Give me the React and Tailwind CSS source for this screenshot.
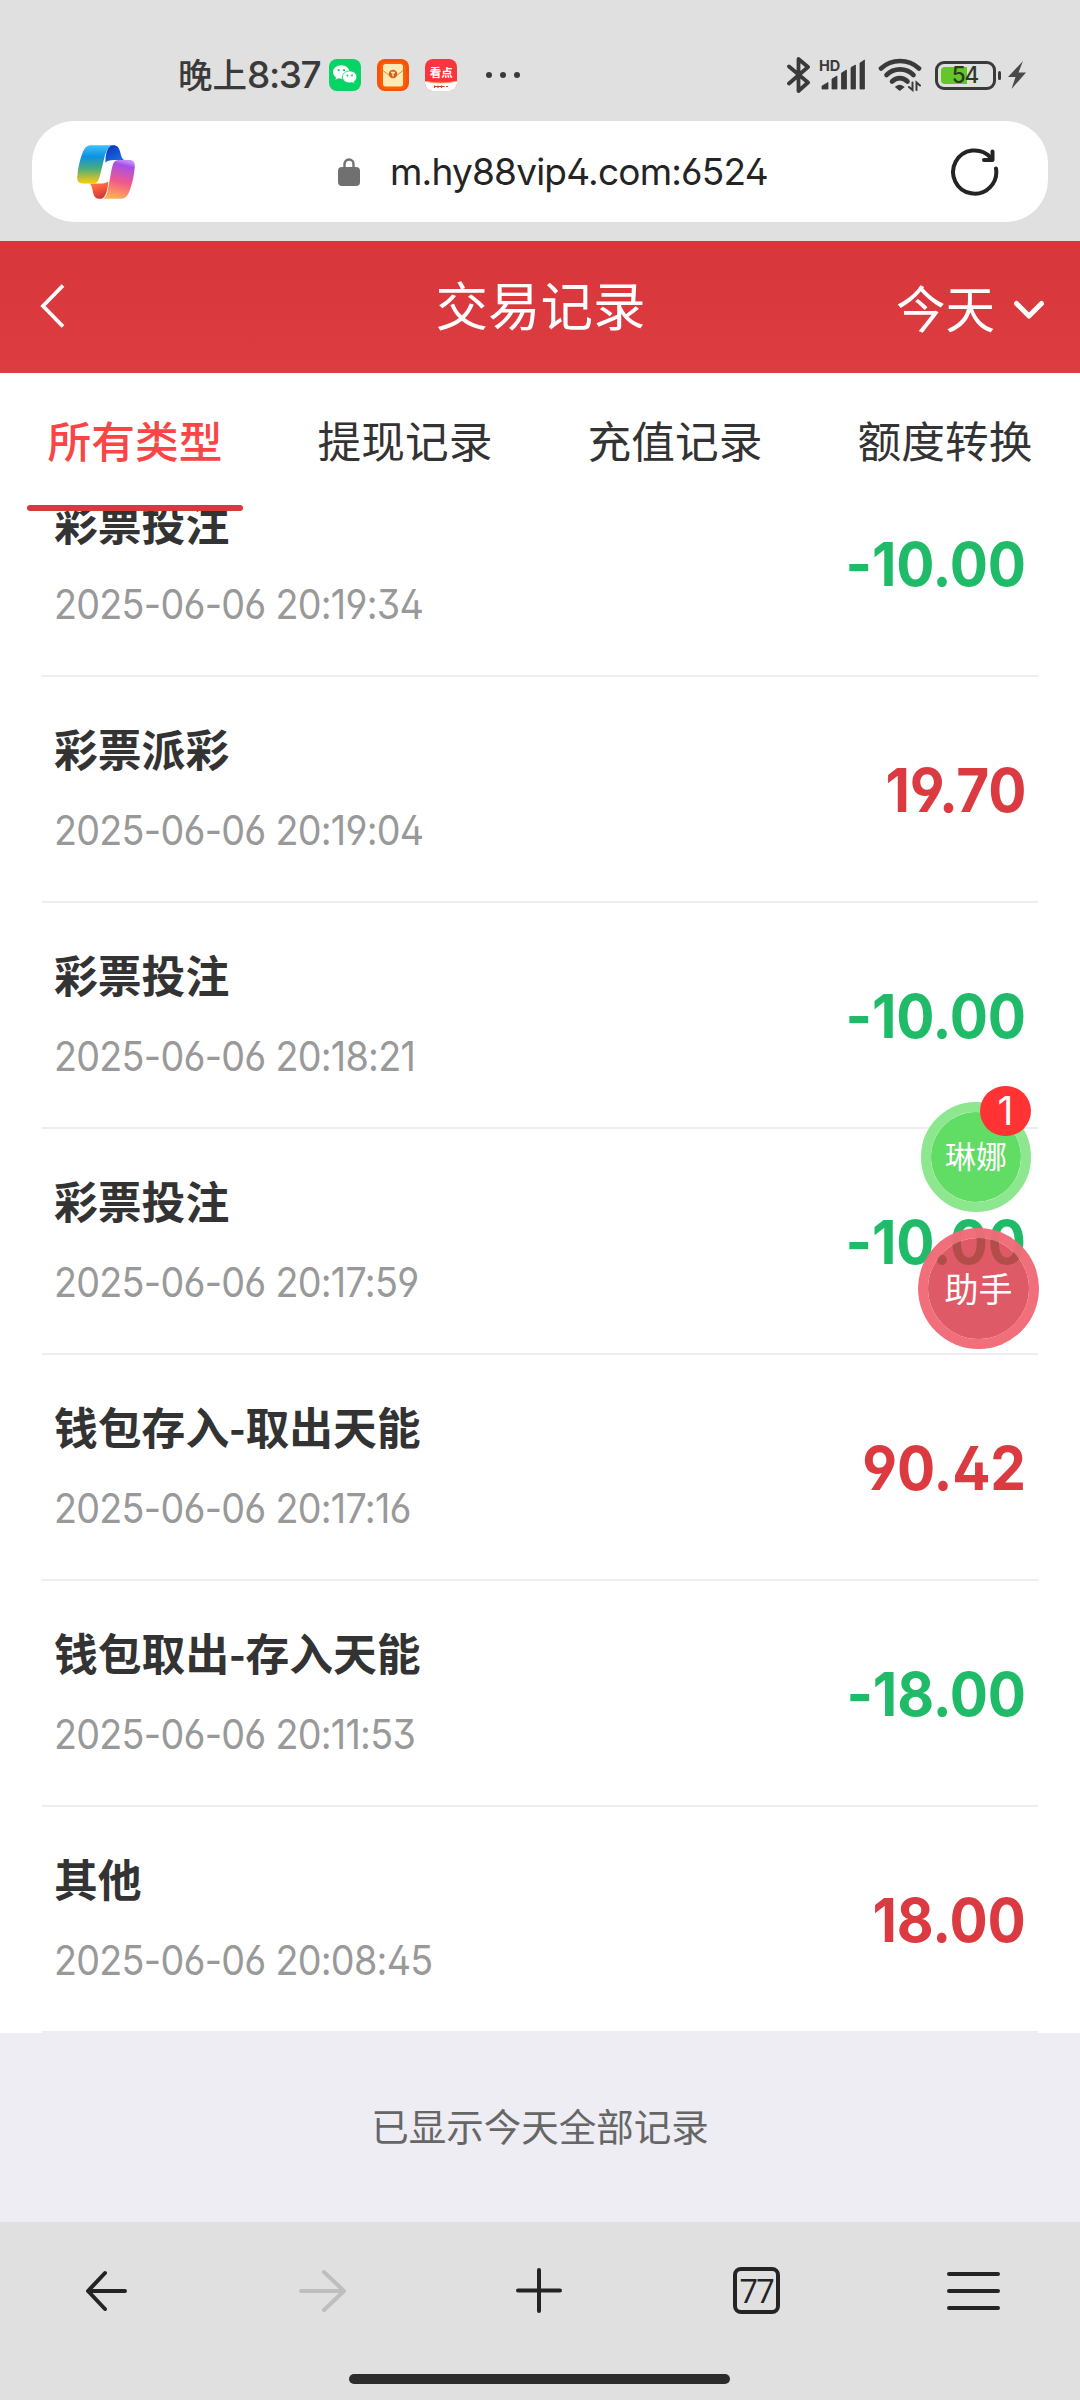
import React, { useState } from "react";

const tabs = ["所有类型", "提现记录", "充值记录", "额度转换"];

const records = [
  { id: 1, title: "彩票投注", time: "2025-06-06 20:19:34", amount: "-10.00" },
  { id: 2, title: "彩票派彩", time: "2025-06-06 20:19:04", amount: "19.70" },
  { id: 3, title: "彩票投注", time: "2025-06-06 20:18:21", amount: "-10.00" },
  { id: 4, title: "彩票投注", time: "2025-06-06 20:17:59", amount: "-10.00" },
  { id: 5, title: "钱包存入-取出天能", time: "2025-06-06 20:17:16", amount: "90.42" },
  { id: 6, title: "钱包取出-存入天能", time: "2025-06-06 20:11:53", amount: "-18.00" },
  { id: 7, title: "其他", time: "2025-06-06 20:08:45", amount: "18.00" },
];

// --- Status bar app icons ---
const WechatIcon = () => (
  <svg width="32" height="32" viewBox="0 0 32 32">
    <rect width="32" height="32" rx="8" fill="#07d366" />
    <path d="M12.3 6.2C7.600 6.200 4 9.200 4 13c0 2.200 1.200 4 3 5.300l-.6 2.500 3-1.500c.9.200 1.900.4 2.900.4 4.600 0 8.300-3 8.300-6.700s-3.700-6.800-8.300-6.800z" fill="#fff" />
    <circle cx="9.600" cy="11.200" r="1.100" fill="#07d366" />
    <circle cx="15" cy="11.200" r="1.100" fill="#07d366" />
    <path d="M20.700 12c-4.100 0-7.300 2.600-7.300 6s3.200 5.900 7.300 5.900c.9 0 1.700-.1 2.500-.4l2.500 1.400-.6-2.300c1.700-1.100 2.700-2.700 2.700-4.600 0-3.400-3-6-7.100-6z" fill="#fff" stroke="#07d366" strokeWidth=".8" />
    <circle cx="18.400" cy="16.500" r="1" fill="#07d366" />
    <circle cx="23" cy="16.500" r="1" fill="#07d366" />
  </svg>
);

const EnvelopeIcon = () => (
  <svg width="32" height="32" viewBox="0 0 32 32">
    <rect width="32" height="32" rx="8" fill="#fb5103" />
    <rect x="3" y="3" width="26" height="27" rx="6" fill="#fd7a1c" opacity=".35" />
    <rect x="6" y="5" width="20" height="22.500" rx="2.500" fill="#fdebb5" />
    <path d="M6 11.500l7 5.500M26 11.500l-7 5.500" stroke="#d98a3c" strokeWidth="1" />
    <circle cx="16" cy="15" r="4.300" fill="#d9601c" />
    <path d="M14 13.500h4M16 13.500v4" stroke="#fdebb5" strokeWidth="1.300" />
  </svg>
);

const KandianIcon = () => (
  <div className="relative flex h-8 w-8 flex-col items-center overflow-hidden rounded-lg bg-[#fb3540]">
    <span className="mt-[6px] text-[11.5px] leading-[15px] font-bold text-white">看点</span>
    <svg className="absolute bottom-0 left-0" width="32" height="10" viewBox="0 0 32 10">
      <path d="M0 0c9 2.500 22 2.500 32 0v10H0z" fill="#fff" />
      <path d="M0 0c9 2.500 22 2.500 32 0" stroke="#ff9a5c" strokeWidth="1" fill="none" />
      <path d="M9.500 5.500h10M9.500 4.500v2.500M13 4.500v2.500M16.500 4.500v2.500M21 5.500h2" stroke="#c9423f" strokeWidth="1.200" fill="none" />
    </svg>
  </div>
);

const CopilotLogo = () => (
  <svg width="58" height="54" viewBox="165 104 168 161" preserveAspectRatio="none">
    <defs>
      <linearGradient id="cpBlue" x1="0" y1="0" x2="0" y2="1">
        <stop offset="0" stopColor="#3bc2fb" />
        <stop offset=".3" stopColor="#0e90e0" />
        <stop offset=".62" stopColor="#4fae7a" />
        <stop offset=".98" stopColor="#fbcb0e" />
      </linearGradient>
      <linearGradient id="cpNavy" x1="0.2" y1="0" x2=".8" y2="1">
        <stop offset="0" stopColor="#0a35be" />
        <stop offset="1" stopColor="#1f74e2" />
      </linearGradient>
      <linearGradient id="cpPink" x1=".6" y1="0" x2=".4" y2="1">
        <stop offset="0" stopColor="#c38bf5" />
        <stop offset=".12" stopColor="#a550e8" />
        <stop offset=".55" stopColor="#f0598c" />
        <stop offset="1" stopColor="#feb150" />
      </linearGradient>
      <linearGradient id="cpRed" x1="0.2" y1="0" x2=".6" y2="1">
        <stop offset="0" stopColor="#fd8a45" />
        <stop offset=".5" stopColor="#f6583c" />
        <stop offset="1" stopColor="#c9373c" />
      </linearGradient>
    </defs>
    <path d="M262 105h8c12 0 17 8 20 20 3 14 6 22 13 24h-30q-20 0-26 8 0-38 15-52z" fill="url(#cpNavy)" />
    <path d="M200 219h30q20 0 26-8c-2 26-8 50-20 53h-8c-10 0-14-8-17-20-2-12-4-22-11-25z" fill="url(#cpRed)" />
    <path d="M206 105h62c-14 4-20 22-25 42l-11 46c-5 18-8 26-18 26h-32c-14 0-18-8-16-24 2-24 8-50 16-70 5-12 12-20 24-20z" fill="url(#cpBlue)" />
    <path d="M285 149h30c14 0 19 8 17 24-2 24-8 50-15 68-5 14-12 23-24 23h-52c8-3 11-14 14-30l10-56c4-18 7-29 20-29z" fill="url(#cpPink)" />
  </svg>
);

const StatusBar = () => (
  <div className="flex h-[121px] items-start justify-between pt-[55px] pr-[54px] pl-[178px] text-[#3a3a3a]">
    <div className="flex h-10 items-center">
      <span className="mb-[5px] text-[34.5px] leading-10 font-medium">晚上</span>
      <span className="font-[Inter] text-[37px] leading-10 font-medium tracking-[-1.4px]">8:37</span>
      <div className="ml-[9px] flex gap-4">
        <WechatIcon />
        <EnvelopeIcon />
        <KandianIcon />
      </div>
      <div className="ml-[29px] flex gap-2">
        <i className="size-[6px] rounded-full bg-[#3a3a3a]" />
        <i className="size-[6px] rounded-full bg-[#3a3a3a]" />
        <i className="size-[6px] rounded-full bg-[#3a3a3a]" />
      </div>
    </div>
    <div className="flex h-10 items-center">
      <svg width="24" height="38" viewBox="0 0 24 38" fill="none" stroke="#3a3a3a" strokeWidth="3.800" strokeLinejoin="round" strokeLinecap="round">
        <path d="M2 10.500l19 16-9.500 8.500V3L21 11 2 27.500" />
      </svg>
      {/* HD + signal bars */}
      <svg className="ml-[8px]" width="50" height="34" viewBox="0 0 50 34" fill="#3a3a3a">
        <text x="0" y="12.500" fontSize="14.500" fontWeight="700" fontFamily="Inter, sans-serif">HD</text>
        <path d="M3 31v-3l6-3.500v6.500zM13 31V21l5-3v13zM22.500 31V15l5-3v19zM32 31V9.500l4.500-2.500v24zM41 31V5l4.500-3v29z" stroke="#3a3a3a" strokeWidth=".8" strokeLinejoin="round" />
      </svg>
      <svg className="ml-[9px]" width="44" height="34" viewBox="0 0 44 34" fill="none" stroke="#3a3a3a" strokeWidth="4.600" strokeLinecap="round">
        <path d="M3 10.500c10.500-10 27.500-10 38 0" />
        <path d="M8.500 17c7.500-7.500 19.500-7.500 27 0" />
        <path d="M14 23.500c4.500-4.500 11-4.500 15.500 0" />
        <path d="M18 29q3.500-3 7.500 0l-3.700 3z" fill="#3a3a3a" strokeWidth="1.500" />
        <path d="M34.500 24.500v7.500l-3.500-3M38.500 32v-7.500l3.500 3" strokeWidth="2" />
      </svg>
      <div className="ml-[13px] flex items-center">
        <div className="relative flex h-[29px] w-[61px] items-center justify-center rounded-[9px] border-[3px] border-[#3a3a3a]">
          <div className="absolute top-[3px] left-[3px] h-[17px] w-[26px] rounded-l-[4px] bg-[#63c728]" />
          <span className="relative font-[Inter] text-[22.5px] leading-[22px] font-medium tracking-[-1px] text-[#2c3a24]">54</span>
        </div>
        <div className="ml-[2px] h-[9px] w-[3.5px] rounded-full bg-[#3a3a3a]" />
      </div>
      <svg className="ml-[7px]" width="18" height="28" viewBox="0 0 18 28" fill="#4a4a4a">
        <path d="M15 0L0 16h7.500L3.500 28 18 11.500h-7.500z" />
      </svg>
    </div>
  </div>
);

const AddressBar = () => (
  <div className="px-8">
    <div className="flex h-[101px] items-center rounded-[42px] bg-white pr-[48px] pl-[45px]">
      <CopilotLogo />
      <svg className="ml-[203px]" width="22" height="28" viewBox="0 0 22 28">
        <rect x="0" y="9" width="22" height="19" rx="4" fill="#707070" />
        <path d="M6.500 10V6a4.500 4.500 0 019 0v4" stroke="#707070" strokeWidth="2.400" fill="none" />
      </svg>
      <span className="ml-[30px] font-[Inter] text-[37px] leading-[50px] tracking-[-0.8px] whitespace-nowrap text-[#242424] [font-feature-settings:'ss01']">
        m.hy88vip4.com:6524
      </span>
      <svg className="ml-auto" width="50" height="50" viewBox="0 0 50 50" fill="none" stroke="#242424" strokeWidth="4" strokeLinecap="round" strokeLinejoin="round">
        <path d="M46 21.500A21.600 21.600 0 1 1 40.500 10.300" />
        <path d="M42.500 4.500v8.500h-8.500" />
      </svg>
    </div>
  </div>
);

const RecordRow = ({ record }) => {
  const isOut = record.amount.startsWith("-");
  return (
    <div className="mx-[42px] flex h-[226px] shrink-0 items-center justify-between border-b-2 border-[#eeeeee] pr-[12px] pl-[12px]">
      <div className="flex flex-col gap-[22px] pb-[1px]">
        <p className="text-[43.8px] leading-[60px] font-bold text-[#333333]">{record.title}</p>
        <p className="origin-left scale-x-[0.92] font-[Inter] text-[41px] leading-[60px] tracking-[-0.8px] text-[#999999] [font-feature-settings:'ss01']">
          {record.time}
        </p>
      </div>
      <p
        className={`origin-right scale-x-[0.93] pt-[2px] font-[Inter] text-[61px] leading-[70px] font-[650] tracking-[-0.2px] [font-feature-settings:'ss01'] ${
          isOut ? "text-[#1fbb69]" : "text-[#db3b40]"
        }`}
      >
        {record.amount}
      </p>
    </div>
  );
};

const BottomNav = () => (
  <div className="flex h-[178px] flex-col items-center bg-[#e0e0e0]">
    <div className="grid h-[137px] w-full grid-cols-5 place-items-center">
      <svg width="50" height="50" viewBox="0 0 50 50" fill="none" stroke="#242424" strokeWidth="4" strokeLinecap="round" strokeLinejoin="round">
        <path d="M42 25H5.500M22 7L5 25l17 18" />
      </svg>
      <svg width="50" height="50" viewBox="0 0 50 50" fill="none" stroke="#bebebe" strokeWidth="4" strokeLinecap="round" strokeLinejoin="round">
        <path d="M2 25h43M25 6l20 19-20 19" />
      </svg>
      <svg width="50" height="50" viewBox="0 0 50 50" fill="none" stroke="#242424" strokeWidth="4" strokeLinecap="round">
        <path d="M3 24.500h42M24 4v41" />
      </svg>
      <div className="flex h-[47px] w-[47px] items-center justify-center rounded-lg border-4 border-[#242424] text-[#242424]">
        <span className="font-[Open_Sans] text-[33px] leading-[33px] tracking-[-2px]">77</span>
      </div>
      <svg width="56" height="50" viewBox="0 0 56 50" fill="none" stroke="#242424" strokeWidth="4" strokeLinecap="round">
        <path d="M5 8h49M5 25h49M5 42h49" />
      </svg>
    </div>
    <div className="mt-[15px] mr-[2px] h-[10px] w-[381px] rounded-full bg-[#2c2c2c]" />
  </div>
);

const App = () => {
  const [activeTab, setActiveTab] = useState(0);

  return (
    <div className="relative flex h-[2400px] w-[1080px] flex-col overflow-hidden bg-[#e0e0e0] font-['Noto_Sans_CJK_SC',sans-serif]">
      <StatusBar />
      <AddressBar />

      {/* Page header */}
      <header className="mt-[19px] grid h-[132px] shrink-0 grid-cols-[1fr_auto_1fr] items-center bg-linear-to-b from-[#d7363b] to-[#dd3c41] pr-[34px] pl-[39px] text-white">
        <svg className="mb-[3px]" width="26" height="44" viewBox="0 0 26 44" fill="none" stroke="#fff" strokeWidth="3.800">
          <path d="M24 1.500L4 22l20 20.500" />
        </svg>
        <h1 className="-ml-[4px] pb-[9px] text-[52.5px] leading-[72px]">交易记录</h1>
        <div className="flex items-center justify-end gap-[17px]">
          <span className="text-[49.5px] leading-[70px]">今天</span>
          <svg className="mt-[6px]" width="34" height="22" viewBox="0 0 34 22" fill="none" stroke="#fff" strokeWidth="5" strokeLinecap="round" strokeLinejoin="round">
            <path d="M4.500 4.500L17 17 29.500 4.500" />
          </svg>
        </div>
      </header>

      {/* Type tabs */}
      <nav className="grid h-[138px] shrink-0 grid-cols-4 bg-white">
        {tabs.map((tab, i) => (
          <button
            key={tab}
            className={`flex flex-col items-center justify-between pt-[35px] text-[43.7px] leading-[62px] ${
              activeTab === i ? "font-medium text-[#f94545]" : "text-[#333333]"
            }`}
            onClick={() => setActiveTab(i)}
          >
            {tab}
            <i className={`h-[6px] w-[216px] rounded-full ${activeTab === i ? "bg-[#d7393f]" : ""}`} />
          </button>
        ))}
      </nav>

      {/* Records, scrolled under the tabs */}
      <main className="flex h-[1522px] shrink-0 flex-col justify-end overflow-hidden bg-white">
        {records.map((record) => (
          <RecordRow key={record.id} record={record} />
        ))}
      </main>
      <div className="flex h-[189px] shrink-0 items-center justify-center bg-[#eeedf3] pb-[4px] text-[37.5px] text-[#666666]">
        已显示今天全部记录
      </div>

      <BottomNav />

      {/* Floating contacts */}
      <div className="absolute top-[1102px] left-[921px] flex h-[110px] w-[110px] items-center justify-center rounded-full border-[10px] border-[#8de78f] bg-[#5cdb5f]/97 bg-clip-padding pb-[3px] text-[31px] text-white">
        琳娜
        <span className="absolute -top-[26px] -right-[10px] flex h-[50px] w-[51px] items-center justify-center rounded-full bg-[#ff3334] font-[Inter] text-[39px]">
          1
        </span>
      </div>
      <div className="absolute top-[1228px] left-[918px] flex h-[121px] w-[121px] items-center justify-center rounded-full border-[10px] border-[#f06a77]/97 bg-[#d63443]/81 bg-clip-padding pb-[2px] text-[34px] text-white">
        助手
      </div>
    </div>
  );
};

export default App;
